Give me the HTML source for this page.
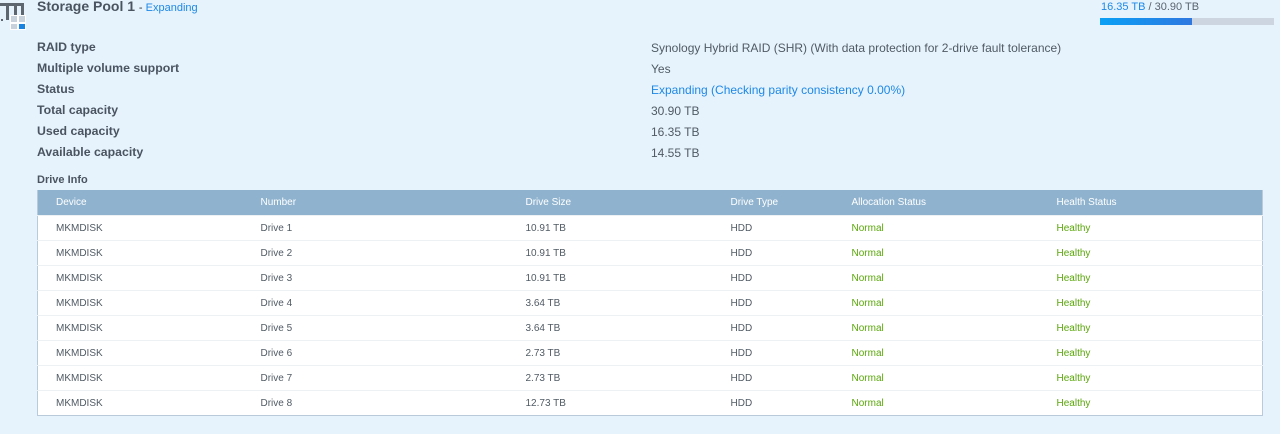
<!DOCTYPE html>
<html><head><style>
body{margin:0;width:1280px;height:434px;background:#e6f3fd;font-family:"Liberation Sans",sans-serif;position:relative;overflow:hidden;color:#505a64}
.abs{position:absolute}
.lbl{position:absolute;left:37px;font-size:12.3px;font-weight:bold;color:#4a5460}
.val{position:absolute;left:651px;font-size:12px;color:#505a64}
table{position:absolute;left:37px;top:190px;width:1226px;border-collapse:collapse;font-size:10px;background:#fff;border:1px solid #b9cbdb;border-top:none}
th{background:#8fb3cf;color:#fff;font-weight:normal;text-align:left;height:25px;padding:0 0 0 18px}
td{height:24px;padding:0 0 0 18px;border-top:1px solid #eef1f4;color:#505a64}
.g{color:#5aa70a}
</style></head><body>
<svg class="abs" style="left:0;top:0" width="27" height="31" viewBox="0 0 27 31">
<rect x="0" y="3" width="24" height="3" fill="#5e6670"/>
<rect x="6" y="3" width="3" height="17" fill="#5e6670"/>
<rect x="14" y="3" width="3" height="17" fill="#5e6670"/>
<rect x="21" y="3" width="3" height="12" fill="#5e6670"/>
<rect x="1" y="19" width="2" height="2" fill="#5e6670"/>
<rect x="10" y="15" width="16" height="15" fill="#fff"/>
<rect x="11" y="16" width="6" height="6" fill="#c8d2dc"/><rect x="19" y="16" width="6" height="6" fill="#c8d2dc"/>
<rect x="11" y="24" width="6" height="5" fill="#c8d2dc"/><rect x="19" y="24" width="6" height="5" fill="#1a84e0"/>
</svg>
<div class="abs" style="left:37px;top:-2px;font-size:14px;font-weight:bold;color:#4a5460">Storage Pool 1 <span style="font-weight:normal;font-size:11px;color:#333">- </span><span style="font-weight:normal;font-size:11px;color:#1e88e5">Expanding</span></div>
<div class="abs" style="left:1101px;top:1px;font-size:11px;color:#5a6470"><span style="color:#1e88e5">16.35 TB</span> / 30.90 TB</div>
<div class="abs" style="left:1100px;top:18px;width:174px;height:7px;background:#cdd6e0"><div style="width:92px;height:7px;background:linear-gradient(90deg,#0aa0f5,#2f78e0)"></div></div>
<div class="lbl" style="top:40px">RAID type</div><div class="val" style="top:41px">Synology Hybrid RAID (SHR) (With data protection for 2-drive fault tolerance)</div>
<div class="lbl" style="top:61px">Multiple volume support</div><div class="val" style="top:62px">Yes</div>
<div class="lbl" style="top:82px">Status</div><div class="val" style="top:83px;color:#1e88e5">Expanding (Checking parity consistency 0.00%)</div>
<div class="lbl" style="top:103px">Total capacity</div><div class="val" style="top:104px">30.90 TB</div>
<div class="lbl" style="top:124px">Used capacity</div><div class="val" style="top:125px">16.35 TB</div>
<div class="lbl" style="top:145px">Available capacity</div><div class="val" style="top:146px">14.55 TB</div>
<div class="abs" style="left:37px;top:174px;font-size:11px;font-weight:bold;color:#4a5460">Drive Info</div>
<table>
<colgroup><col style="width:205px"><col style="width:265px"><col style="width:205px"><col style="width:121px"><col style="width:205px"><col></colgroup>
<tr><th>Device</th><th>Number</th><th>Drive Size</th><th>Drive Type</th><th>Allocation Status</th><th>Health Status</th></tr>
<tr><td>MKMDISK</td><td>Drive 1</td><td>10.91 TB</td><td>HDD</td><td class="g">Normal</td><td class="g">Healthy</td></tr>
<tr><td>MKMDISK</td><td>Drive 2</td><td>10.91 TB</td><td>HDD</td><td class="g">Normal</td><td class="g">Healthy</td></tr>
<tr><td>MKMDISK</td><td>Drive 3</td><td>10.91 TB</td><td>HDD</td><td class="g">Normal</td><td class="g">Healthy</td></tr>
<tr><td>MKMDISK</td><td>Drive 4</td><td>3.64 TB</td><td>HDD</td><td class="g">Normal</td><td class="g">Healthy</td></tr>
<tr><td>MKMDISK</td><td>Drive 5</td><td>3.64 TB</td><td>HDD</td><td class="g">Normal</td><td class="g">Healthy</td></tr>
<tr><td>MKMDISK</td><td>Drive 6</td><td>2.73 TB</td><td>HDD</td><td class="g">Normal</td><td class="g">Healthy</td></tr>
<tr><td>MKMDISK</td><td>Drive 7</td><td>2.73 TB</td><td>HDD</td><td class="g">Normal</td><td class="g">Healthy</td></tr>
<tr><td>MKMDISK</td><td>Drive 8</td><td>12.73 TB</td><td>HDD</td><td class="g">Normal</td><td class="g">Healthy</td></tr>
</table>
</body></html>
